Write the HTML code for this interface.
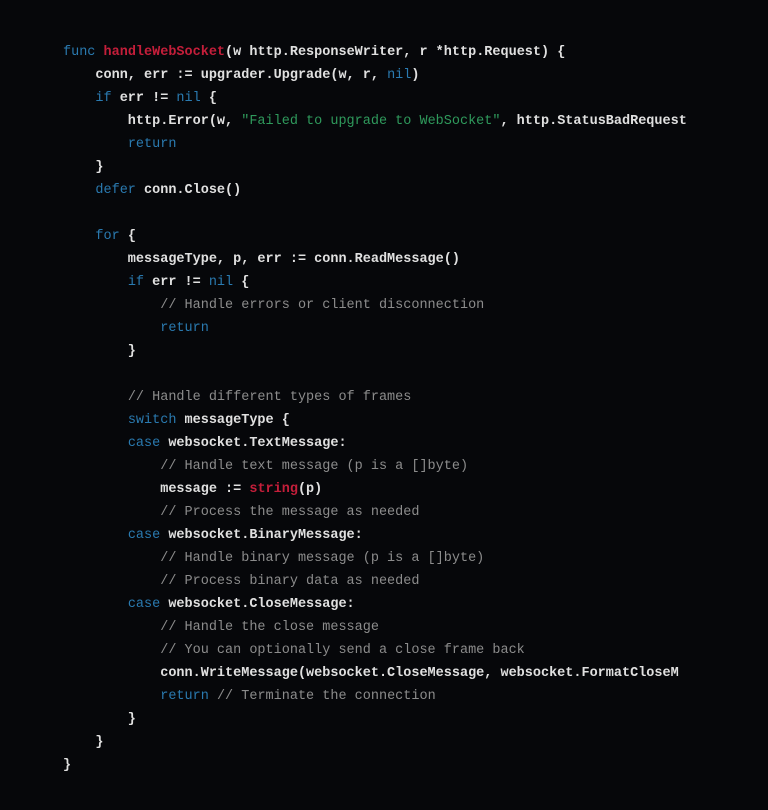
<!DOCTYPE html>
<html><head><meta charset="utf-8"><style>
html,body{margin:0;padding:0;background:#06070a;width:768px;height:810px;overflow:hidden}
pre{position:absolute;left:63px;top:41px;margin:0;font-family:"Liberation Mono",monospace;font-size:13.5px;line-height:23px;color:#e0e0e0;white-space:pre;font-weight:bold}
.k{color:#2a7ab0;font-weight:normal}.f{color:#c41e3a}.s{color:#2f9a5c;font-weight:normal}.c{color:#8c8c8c;font-weight:normal}
</style></head><body><pre><span class="k">func</span> <span class="f">handleWebSocket</span>(w http.ResponseWriter, r *http.Request) {
    conn, err := upgrader.Upgrade(w, r, <span class="k">nil</span>)
    <span class="k">if</span> err != <span class="k">nil</span> {
        http.Error(w, <span class="s">"Failed to upgrade to WebSocket"</span>, http.StatusBadRequest
        <span class="k">return</span>
    }
    <span class="k">defer</span> conn.Close()

    <span class="k">for</span> {
        messageType, p, err := conn.ReadMessage()
        <span class="k">if</span> err != <span class="k">nil</span> {
            <span class="c">// Handle errors or client disconnection</span>
            <span class="k">return</span>
        }

        <span class="c">// Handle different types of frames</span>
        <span class="k">switch</span> messageType {
        <span class="k">case</span> websocket.TextMessage:
            <span class="c">// Handle text message (p is a []byte)</span>
            message := <span class="f">string</span>(p)
            <span class="c">// Process the message as needed</span>
        <span class="k">case</span> websocket.BinaryMessage:
            <span class="c">// Handle binary message (p is a []byte)</span>
            <span class="c">// Process binary data as needed</span>
        <span class="k">case</span> websocket.CloseMessage:
            <span class="c">// Handle the close message</span>
            <span class="c">// You can optionally send a close frame back</span>
            conn.WriteMessage(websocket.CloseMessage, websocket.FormatCloseM
            <span class="k">return</span> <span class="c">// Terminate the connection</span>
        }
    }
}</pre></body></html>
